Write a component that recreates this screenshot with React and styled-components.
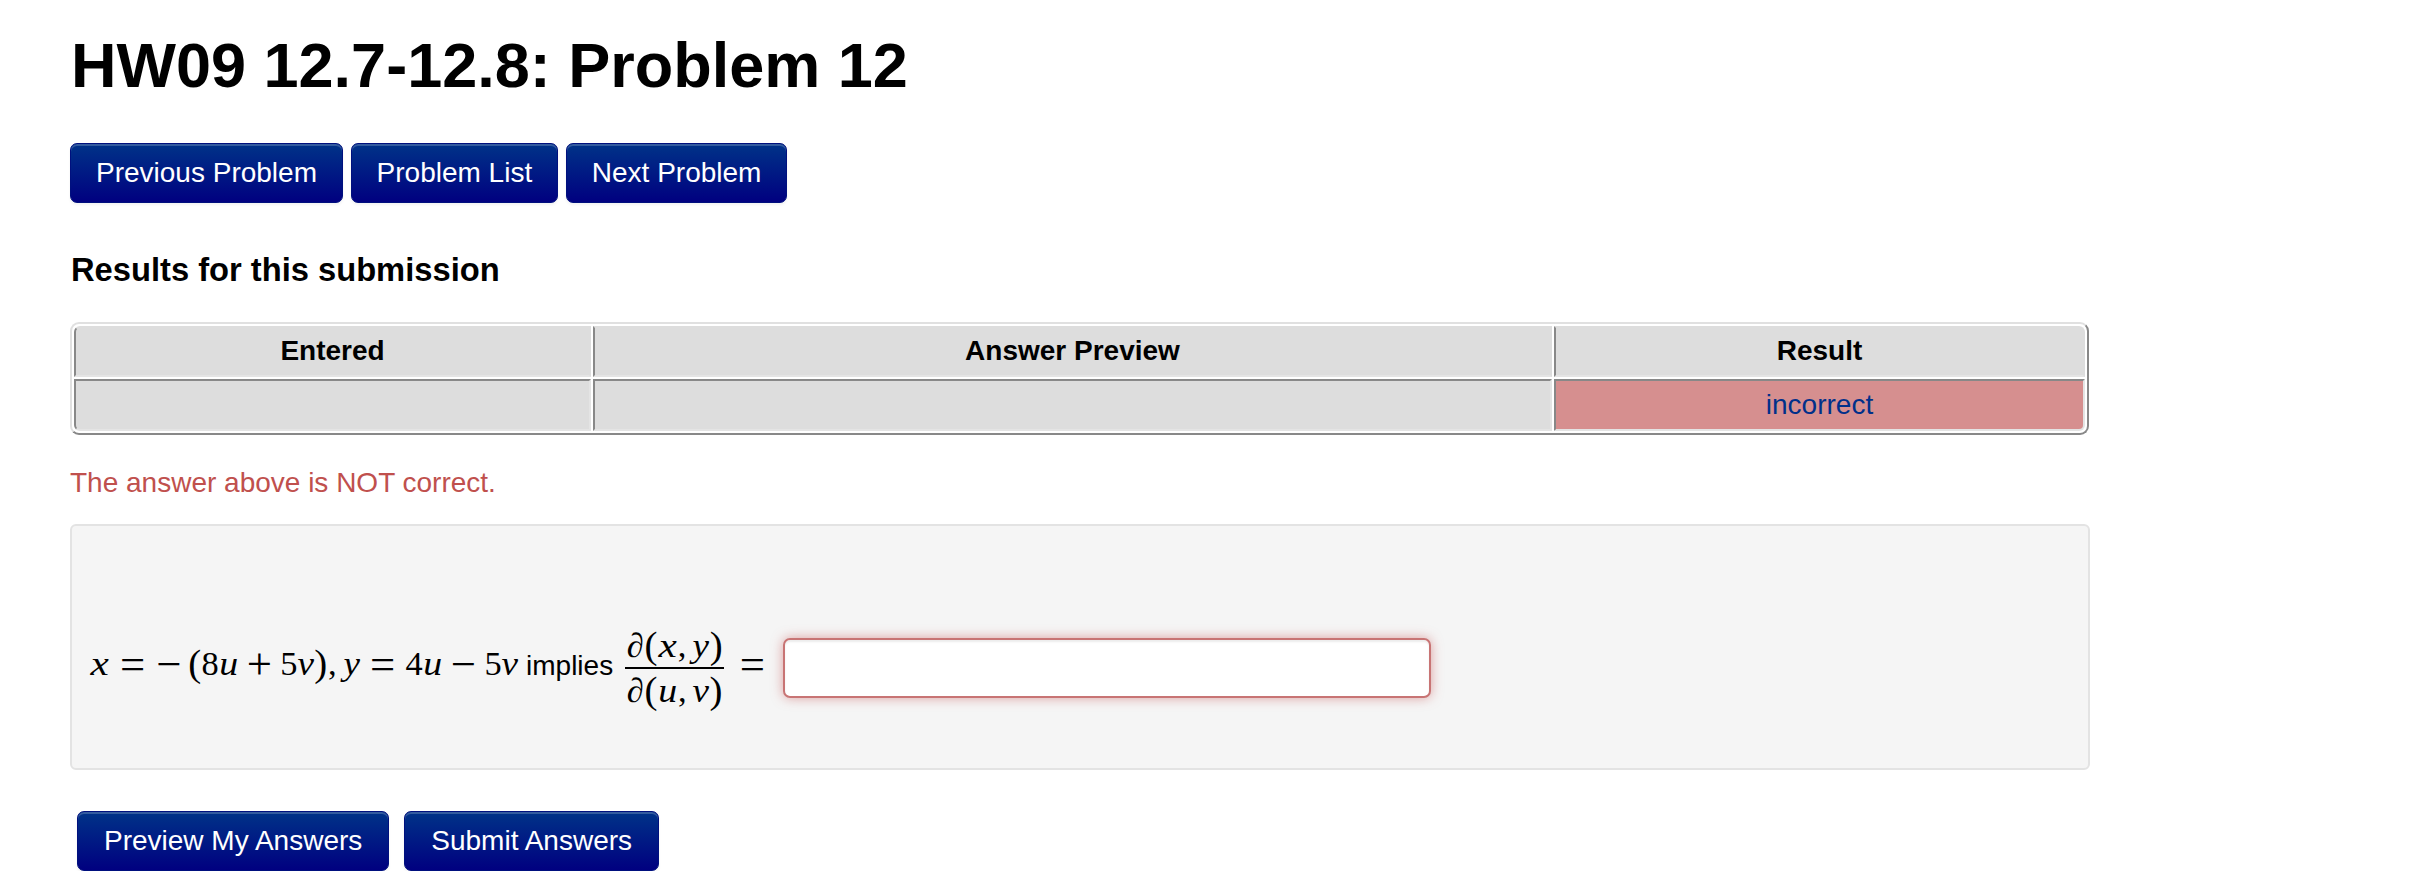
import React from "react";
import styled, { createGlobalStyle } from "styled-components";

const Global = createGlobalStyle`
  html, body { margin: 0; padding: 0; background: #fff; }
  body { font-family: "Liberation Sans", Arial, sans-serif; color: #000; }
`;

const Page = styled.div`
  padding: 30px 0 0 70px;
  width: 2020px;
`;

const Title = styled.h1`
  margin: 0 0 43px 1px;
  font-size: 63px;
  line-height: 70px;
  font-weight: 700;
`;

const Nav = styled.div`
  display: flex;
  gap: ${(p) => p.$gap}px;
  margin-left: ${(p) => p.$indent || 0}px;
`;

const Button = styled.button`
  box-sizing: border-box;
  height: 60px;
  padding: 0 ${(p) => p.$pad || 25}px;
  border: 1px solid #00107e;
  border-radius: 7px;
  background: linear-gradient(to bottom, #003388, #000080);
  box-shadow: inset 0 2px 0 rgba(255, 255, 255, 0.2), 0 2px 3px rgba(0, 0, 0, 0.05);
  color: #fff;
  font-family: "Liberation Sans", Arial, sans-serif;
  font-size: 28px;
  line-height: 1;
`;

const SectionTitle = styled.h3`
  margin: 49px 0 34px 1px;
  font-size: 32.7px;
  line-height: 36px;
  font-weight: 700;
`;

const Results = styled.table`
  box-sizing: border-box;
  width: 2019px;
  table-layout: fixed;
  border-collapse: separate;
  border-spacing: 2px;
  border-width: 2px;
  border-style: solid;
  border-color: #e0e0e0 #888 #888 #e0e0e0;
  border-radius: 9px;
  font-size: 28px;
`;

const Head = styled.th`
  box-sizing: border-box;
  height: 51px;
  padding: 0 0 2px;
  background: #ddd;
  border-width: 2px;
  border-style: solid;
  border-color: #ddd #ddd #e4e4e4 #888;
  font-weight: 700;
  text-align: center;
  &:first-child { border-top-left-radius: 6px; }
  &:last-child { border-top-right-radius: 6px; }
`;

const Cell = styled.td`
  box-sizing: border-box;
  height: 52px;
  padding: 0;
  background: ${(p) => (p.$bad ? "#d68f8f" : "#ddd")};
  color: ${(p) => (p.$bad ? "#00308a" : "#000")};
  border-width: 2px;
  border-style: solid;
  border-color: #888 #e4e4e4 #e4e4e4 #888;
  text-align: center;
  &:first-child { border-bottom-left-radius: 6px; }
  &:last-child { border-bottom-right-radius: 6px; }
`;

const Message = styled.p`
  margin: 28px 0 21px;
  font-size: 28px;
  line-height: 40px;
  color: #c0504d;
`;

const Well = styled.div`
  box-sizing: border-box;
  height: 246px;
  padding: 99px 18px 0;
  background: #f5f5f5;
  border: 2px solid #e3e3e3;
  border-radius: 6px;
  font-size: 28px;
  line-height: 40px;
  white-space: nowrap;
  margin-bottom: 41px;
`;

const Sym = styled.span`
  display: inline-block;
  width: ${(p) => p.$w}em;
  margin-left: ${(p) => p.$l || 0}em;
  margin-right: ${(p) => p.$r || 0}em;
  font-family: "Liberation Serif", "Times New Roman", serif;
  font-size: 34.4px;
  font-style: ${(p) => (p.$up ? "normal" : "italic")};
  line-height: 40px;
  text-align: center;
`;

const Stretched = styled.span`
  display: inline-block;
  transform: scaleX(${(p) => p.$sx});
`;

const Big = styled.span`
  display: inline-block;
  font-size: ${(p) => p.$scale}em;
  line-height: 0;
  vertical-align: ${(p) => p.$drop}px;
`;

const Frac = styled.span`
  display: inline-flex;
  flex-direction: column;
  align-items: center;
  vertical-align: middle;
  margin: 0 5.5px 0 4px;
`;

const Numerator = styled.span`
  display: block;
  height: 40px;
  padding-bottom: 2px;
`;

const Bar = styled.span`
  display: block;
  width: 99px;
  height: 2px;
  background: #000;
`;

const Denominator = styled.span`
  display: block;
  height: 40px;
  padding: 1px 0 1px;
`;

const Answer = styled.input`
  box-sizing: border-box;
  width: 648px;
  height: 60px;
  margin: 0 0 0 -0.5px;
  vertical-align: middle;
  background: #fff;
  border: 2px solid #c87474;
  border-radius: 7px;
  box-shadow: inset 0 2px 2px rgba(0, 0, 0, 0.075), 0 0 12px rgba(200, 90, 90, 0.55);
  outline: none;
`;

const Var = ({ w, sx, children }) => (
  <Sym $w={w}><Stretched $sx={sx}>{children}</Stretched></Sym>
);
const Op = ({ w = 0.778, l = 0, r = 0, children }) => (
  <Sym $up $w={w} $l={l} $r={r}><Big $scale={1.3} $drop={-3.5}>{children}</Big></Sym>
);
const Paren = ({ children }) => (
  <Sym $up $w={0.389}><Big $scale={1.13} $drop={-1}>{children}</Big></Sym>
);
const Digit = ({ children }) => <Sym $up $w={0.5}>{children}</Sym>;

const x = <Var w={0.572} sx={1.2}>x</Var>;
const y = <Var w={0.49} sx={1.08}>y</Var>;
const u = <Var w={0.572} sx={1.1}>u</Var>;
const v = <Var w={0.485} sx={1.08}>v</Var>;
const eq = <Op l={0.278} r={0.278}>=</Op>;
const open = <Paren>(</Paren>;
const close = <Paren>)</Paren>;
const comma = <Sym $up $w={0.278} $r={0.167}>,</Sym>;
const partial = <Sym $up $w={0.531}>∂</Sym>;

export default function App() {
  return (
    <Page>
      <Global />
      <Title>HW09 12.7-12.8: Problem 12</Title>
      <Nav $gap={7.6}>
        <Button>Previous Problem</Button>
        <Button>Problem List</Button>
        <Button>Next Problem</Button>
      </Nav>
      <SectionTitle>Results for this submission</SectionTitle>
      <Results>
        <colgroup>
          <col style={{ width: 517 }} />
          <col style={{ width: 959 }} />
          <col style={{ width: 531 }} />
        </colgroup>
        <thead>
          <tr>
            <Head>Entered</Head>
            <Head>Answer Preview</Head>
            <Head>Result</Head>
          </tr>
        </thead>
        <tbody>
          <tr>
            <Cell />
            <Cell />
            <Cell $bad>incorrect</Cell>
          </tr>
        </tbody>
      </Results>
      <Message>The answer above is NOT correct.</Message>
      <Well>
        {x}{eq}
        <Op r={0.167}>−</Op>
        {open}<Digit>8</Digit>{u}
        <Op l={0.222} r={0.222}>+</Op>
        <Digit>5</Digit>{v}{close}{comma}{y}{eq}
        <Digit>4</Digit>{u}
        <Op l={0.222} r={0.222}>−</Op>
        <Digit>5</Digit>{v}
        {" implies "}
        <Frac>
          <Numerator>{partial}{open}{x}{comma}{y}{close}</Numerator>
          <Bar />
          <Denominator>{partial}{open}{u}{comma}{v}{close}</Denominator>
        </Frac>
        {eq}{" "}
        <Answer type="text" aria-label="answer" />
      </Well>
      <Nav $gap={15} $indent={7}>
        <Button $pad={26}>Preview My Answers</Button>
        <Button $pad={26}>Submit Answers</Button>
      </Nav>
    </Page>
  );
}
